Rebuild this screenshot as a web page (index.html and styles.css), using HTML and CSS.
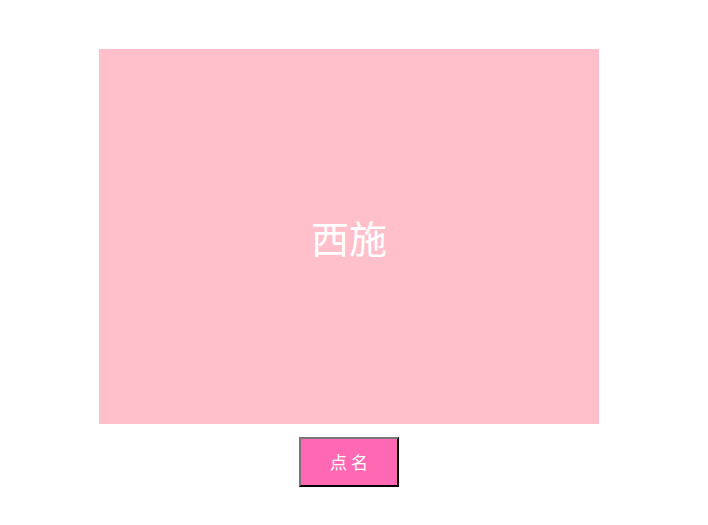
FILE: index.html
```html
<!DOCTYPE html>
<html lang="zh">
<head>
<meta charset="utf-8">
<link rel="stylesheet" href="styles.css">
</head>
<body>
<main class="page">
  <div class="card">西施</div>
  <button class="call-btn">点名</button>
</main>
</body>
</html>
```
FILE: styles.css
```css
html, body {
  margin: 0;
  padding: 0;
  background: #ffffff;
}
.page {
  width: 698px;
  padding-top: 49px;
  display: flex;
  flex-direction: column;
  align-items: center;
  gap: 13px;
  font-family: "Noto Sans CJK SC", "Noto Sans", sans-serif;
}
.card {
  width: 500px;
  height: 375px;
  background: #ffc0cb;
  color: #ffffff;
  font-size: 38px;
  display: flex;
  align-items: center;
  justify-content: center;
}
.call-btn {
  width: 100px;
  height: 50px;
  margin: 0;
  padding: 0 0 2px 0;
  background: #ff69b4;
  color: #ffffff;
  font-family: "Noto Sans CJK SC", "Noto Sans", sans-serif;
  font-size: 17px;
  letter-spacing: 4px;
  text-indent: 4px;
  border: 2px outset #767676;
  border-color: #767676 #2b2b2b #2b2b2b #767676;
}
```
